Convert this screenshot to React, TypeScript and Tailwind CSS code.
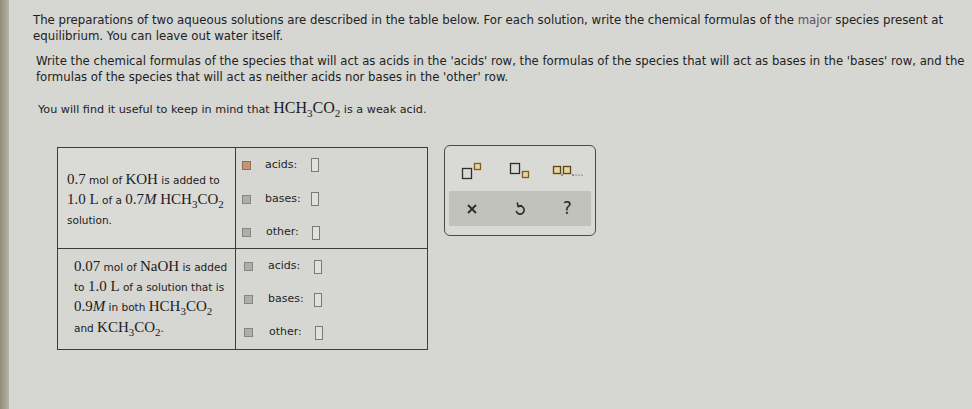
import React from "react";

const sans = { fontFamily: '"DejaVu Sans", Verdana, sans-serif' };
const serif = { fontFamily: '"Liberation Serif", "Times New Roman", serif' };

function M({ children, size = "text-[15px]" }: { children: React.ReactNode; size?: string }) {
  return <span className={size + " text-[#1c1c1c]"} style={serif}>{children}</span>;
}
function Sub({ children }: { children: React.ReactNode }) {
  return <span className="text-[11px] relative top-[4px]">{children}</span>;
}

function Check({ active }: { active?: boolean }) {
  return (
    <span
      className={
        "inline-block w-[9px] h-[9px] border " +
        (active ? "border-[#9a6a55] bg-[#c4957d]" : "border-[#858585] bg-[#aeaeaa]")
      }
    />
  );
}

function Field({ label, active, h, cw }: { label: string; active?: boolean; h: string; cw: string }) {
  return (
    <div className={"flex items-center " + h}>
      <div className={cw + " flex justify-start"}>
        <Check active={active} />
      </div>
      <span className="text-[11px] text-[#1f1f1f] w-[45px] pl-[1px]" style={sans}>
        {label}
      </span>
      <span className="ml-[2px] inline-block w-[8px] h-[14px] border border-[#7a7a7a] bg-[#e0e0dd]" />
    </div>
  );
}

export default function App() {
  return (
    <div className="w-[972px] h-[409px] overflow-hidden flex bg-[#d6d6d3] text-[#222]" style={sans}>
      <div className="w-[9px] shrink-0 h-full bg-gradient-to-r from-[#8f8d79] to-[#b6b5a8]" />
      <div className="flex-1 min-w-0 pl-[24px] pt-[12px]">
        <p className="text-[11.75px] leading-[16px] whitespace-nowrap">
          The preparations of two aqueous solutions are described in the table below. For each solution, write the chemical formulas of the <span className="text-[#5e4f60]">major</span> species present at
          <br />
          equilibrium. You can leave out water itself.
        </p>
        <p className="text-[11.7px] leading-[16px] mt-[9px] ml-[3px] whitespace-nowrap">
          Write the chemical formulas of the species that will act as acids in the 'acids' row, the formulas of the species that will act as bases in the 'bases' row, and the
          <br />
          formulas of the species that will act as neither acids nor bases in the 'other' row.
        </p>
        <p className="text-[11.2px] leading-[16px] mt-[15px] ml-[5px] whitespace-nowrap">
          You will find it useful to keep in mind that <M size="text-[16px]">HCH<Sub>3</Sub>CO<Sub>2</Sub></M> is a weak acid.
        </p>

        <div className="flex items-start mt-[29px] ml-[24px] gap-[16px]">
          <div className="w-[371px] shrink-0 border border-[#3c3c3c]">
            <div className="flex h-[101px] border-b border-[#3c3c3c]">
              <div className="w-[178px] border-r border-[#3c3c3c] pl-[9px] pt-[21px] text-[10.5px] leading-[20px] bg-[#dadad7]">
                <div className="h-[20px]"><M>0.7</M> mol of <M>KOH</M> is added to</div>
                <div className="h-[21px]"><M>1.0 L</M> of a <M>0.7<i>M</i> HCH<Sub>3</Sub>CO<Sub>2</Sub></M></div>
                <div>solution.</div>
              </div>
              <div className="flex-1 pl-[6px]">
                <Field label="acids:" active h="h-[34px]" cw="w-[22px]" />
                <Field label="bases:" h="h-[34px]" cw="w-[22px]" />
                <Field label="other:" h="h-[33px]" cw="w-[23px]" />
              </div>
            </div>
            <div className="flex h-[100px]">
              <div className="w-[178px] border-r border-[#3c3c3c] pl-[16px] pt-[7px] text-[10.5px] leading-[20px]">
                <div className="h-[20px]"><M>0.07</M> mol of <M>NaOH</M> is added</div>
                <div className="h-[20px]">to <M>1.0 L</M> of a solution that is</div>
                <div className="h-[21px]"><M>0.9<i>M</i></M> in both <M>HCH<Sub>3</Sub>CO<Sub>2</Sub></M></div>
                <div className="h-[20px]">and <M>KCH<Sub>3</Sub>CO<Sub>2</Sub></M>.</div>
              </div>
              <div className="flex-1 pl-[8px] pt-[1px]">
                <Field label="acids:" h="h-[33px]" cw="w-[23px]" />
                <Field label="bases:" h="h-[33px]" cw="w-[23px]" />
                <Field label="other:" h="h-[33px]" cw="w-[24px]" />
              </div>
            </div>
          </div>

          <div className="w-[152px] shrink-0 -mt-[2px] h-[91px] border border-[#4a4a4a] rounded-[6px] bg-[#d9d9d6] flex flex-col px-[3px] pt-[13px]">
            <div className="flex h-[24px] items-center">
              <div className="w-[48px] flex justify-center">
                <svg width="22" height="18" viewBox="0 0 22 18">
                  <rect x="1.5" y="6.5" width="9" height="10" fill="none" stroke="#2e2e2e" strokeWidth="1.3" />
                  <rect x="13.5" y="1.5" width="6" height="6" fill="#e6d6a2" stroke="#7d5f18" strokeWidth="1.3" />
                </svg>
              </div>
              <div className="w-[48px] flex justify-center">
                <svg width="22" height="18" viewBox="0 0 22 18">
                  <rect x="1.5" y="1.5" width="9" height="10" fill="none" stroke="#2e2e2e" strokeWidth="1.3" />
                  <rect x="13.5" y="9.5" width="6" height="6" fill="#e6d6a2" stroke="#7d5f18" strokeWidth="1.3" />
                </svg>
              </div>
              <div className="w-[48px] flex justify-center">
                <svg width="34" height="18" viewBox="0 0 34 18">
                  <rect x="2.5" y="4.5" width="7" height="7" fill="#e6d6a2" stroke="#5d4612" strokeWidth="1.3" />
                  <rect x="12.5" y="4.5" width="7" height="7" fill="#e6d6a2" stroke="#5d4612" strokeWidth="1.3" />
                  <circle cx="11" cy="13" r="0.8" fill="#333" />
                  <circle cx="22" cy="13" r="0.8" fill="#333" />
                  <circle cx="25" cy="13" r="0.6" fill="#333" />
                  <circle cx="28" cy="13" r="0.6" fill="#333" />
                  <circle cx="31" cy="13" r="0.6" fill="#333" />
                </svg>
              </div>
            </div>
            <div className="mt-[8px] mx-[1px] h-[35px] bg-[#c2c2bd] flex items-center text-[#2a2a2a]">
              <div className="w-[47px] flex justify-center">
                <svg width="10" height="10" viewBox="0 0 10 10">
                  <path d="M1 1 L9 9 M9 1 L1 9" stroke="#2a2a2a" strokeWidth="1.8" />
                </svg>
              </div>
              <div className="w-[48px] flex justify-center">
                <svg width="12" height="15" viewBox="0 0 12 15">
                  <path d="M3.2 1.5 L4.2 5.6 L8 4.6" fill="none" stroke="#2a2a2a" strokeWidth="1.6" />
                  <path d="M4.2 5.6 A4 4 0 1 1 2.2 9.8" fill="none" stroke="#2a2a2a" strokeWidth="1.6" />
                </svg>
              </div>
              <div className="w-[48px] flex justify-center text-[17px] leading-none" style={sans}>?</div>
            </div>
          </div>
        </div>
      </div>
    </div>
  );
}
